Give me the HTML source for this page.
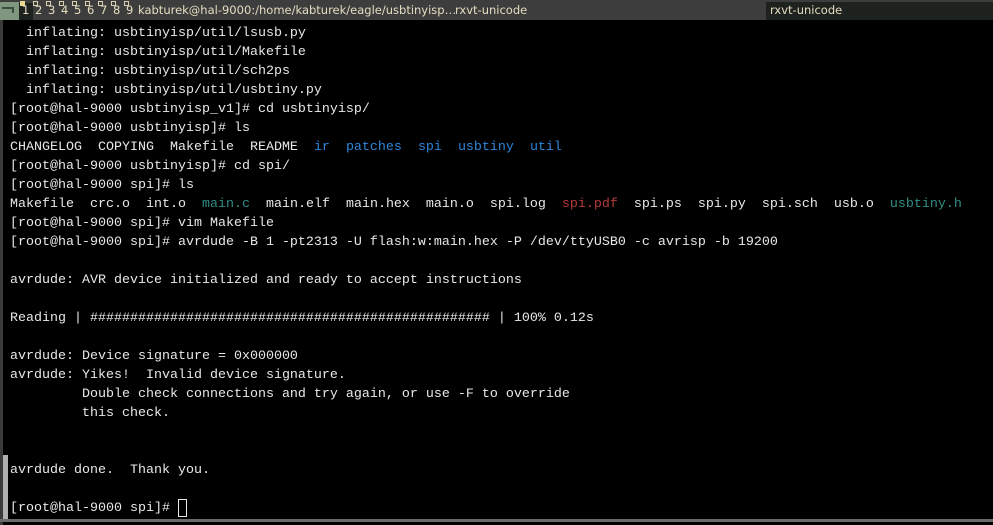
<!DOCTYPE html>
<html><head><meta charset="utf-8"><style>
html,body{margin:0;padding:0;background:#000;width:993px;height:525px;overflow:hidden;position:relative}
.bar{position:absolute;left:0;top:0;width:993px;height:20px;background:#3d3d3d;font-family:"DejaVu Sans","Liberation Sans",sans-serif;font-size:11.5px;color:#e4dcc0}
.bar span{position:absolute;top:3px;white-space:pre}
.ico{position:absolute;left:0;top:2px;width:19px;height:18px;background:#7f977f}
.ico:before{content:"";position:absolute;left:2px;top:5px;width:10px;height:4px;border-top:2px solid #3d4d3d;border-right:2px solid #3d4d3d}
.one{position:absolute;left:19px;top:3px;width:14px;height:17px;background:#1e221e}
.dot{position:absolute;top:1px;width:3px;height:3px;border:1px solid #d8d0b0}
.right{position:absolute;left:766px;top:2px;width:227px;height:18px;background:#1e221e}
pre{position:absolute;left:10px;top:24px;margin:0;font-family:"Liberation Mono","DejaVu Sans Mono",monospace;font-size:13.33px;line-height:19px;color:#e8e8e8}
.b{color:#2e86d8}.t{color:#2f8f86}.r{color:#b43a3a}
.lb{position:absolute;left:0;top:20px;width:3px;height:505px;background:#3a3a3a}
.sb{position:absolute;left:3px;top:455px;width:5px;height:64px;background:#b0b0b0}
.bb{position:absolute;left:0;top:519px;width:993px;height:3px;background:#6a6a6a}
.cur{position:absolute;left:178px;top:499px;width:7px;height:16px;border:1px solid #e8e8e8}
</style></head><body>
<div class="bar">
<div class="ico"></div>
<div class="one"></div>
<div class="dot" style="left:20px;background:#e8d890;border-color:#e8d890"></div>
<div class="dot" style="left:33px"></div><div class="dot" style="left:46px"></div><div class="dot" style="left:59px"></div><div class="dot" style="left:72px"></div><div class="dot" style="left:85px"></div><div class="dot" style="left:98px"></div><div class="dot" style="left:111px"></div><div class="dot" style="left:124px"></div>
<span style="left:22px">1</span><span style="left:35px">2</span><span style="left:48px">3</span><span style="left:61px">4</span><span style="left:74px">5</span><span style="left:87px">6</span><span style="left:100px">7</span><span style="left:113px">8</span><span style="left:126px">9</span>
<span style="left:138px">kabturek@hal-9000:/home/kabturek/eagle/usbtinyisp…</span>
<span style="left:455px">rxvt-unicode</span>
<div class="right"></div>
<span style="left:770px">rxvt-unicode</span>
</div>
<div class="lb"></div><div class="sb"></div><div class="bb"></div>
<pre>  inflating: usbtinyisp/util/lsusb.py
  inflating: usbtinyisp/util/Makefile
  inflating: usbtinyisp/util/sch2ps
  inflating: usbtinyisp/util/usbtiny.py
[root@hal-9000 usbtinyisp_v1]# cd usbtinyisp/
[root@hal-9000 usbtinyisp]# ls
CHANGELOG  COPYING  Makefile  README  <span class="b">ir</span>  <span class="b">patches</span>  <span class="b">spi</span>  <span class="b">usbtiny</span>  <span class="b">util</span>
[root@hal-9000 usbtinyisp]# cd spi/
[root@hal-9000 spi]# ls
Makefile  crc.o  int.o  <span class="t">main.c</span>  main.elf  main.hex  main.o  spi.log  <span class="r">spi.pdf</span>  spi.ps  spi.py  spi.sch  usb.o  <span class="t">usbtiny.h</span>
[root@hal-9000 spi]# vim Makefile
[root@hal-9000 spi]# avrdude -B 1 -pt2313 -U flash:w:main.hex -P /dev/ttyUSB0 -c avrisp -b 19200

avrdude: AVR device initialized and ready to accept instructions

Reading | ################################################## | 100% 0.12s

avrdude: Device signature = 0x000000
avrdude: Yikes!  Invalid device signature.
         Double check connections and try again, or use -F to override
         this check.


avrdude done.  Thank you.

[root@hal-9000 spi]# </pre>
<div class="cur"></div>
</body></html>
